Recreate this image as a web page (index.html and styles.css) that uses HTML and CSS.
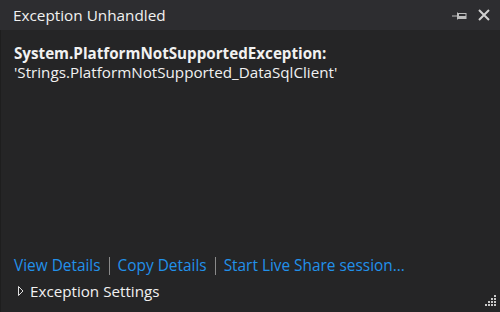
FILE: index.html
```html
<!DOCTYPE html>
<html>
<head>
<meta charset="utf-8">
<link rel="stylesheet" href="styles.css">
</head>
<body>
<div class="window">
  <div class="titlebar">
    <span class="title">Exception Unhandled</span>
    <div class="controls">
      <svg class="pin" width="15" height="8" viewBox="0 0 15 8">
        <path d="M0 4H5" stroke="#bdbdbd" stroke-width="1"/>
        <path d="M5.5 0.5V7.5" stroke="#bdbdbd" stroke-width="1"/>
        <rect x="6.5" y="1.5" width="7.5" height="5" fill="none" stroke="#bdbdbd" stroke-width="1"/>
        <rect x="6.5" y="4" width="7.5" height="2.5" fill="#bdbdbd"/>
      </svg>
      <svg class="close" width="12" height="12" viewBox="0 0 12 12">
        <path d="M1 1L11 11M11 1L1 11" stroke="#d0d0d0" stroke-width="2"/>
      </svg>
    </div>
  </div>
  <div class="body">
    <div class="message">
      <div class="exc">System.PlatformNotSupportedException:</div>
      <div class="detail">'Strings.PlatformNotSupported_DataSqlClient'</div>
    </div>
    <div class="links">
      <a class="link">View Details</a><span class="sep"></span><a class="link">Copy Details</a><span class="sep"></span><a class="link">Start Live Share session...</a>
    </div>
    <div class="settings">
      <svg class="arrow" width="6" height="10" viewBox="0 0 6 10">
        <path d="M0.5 0.5L5 5L0.5 9.5Z" fill="none" stroke="#e0e0e0" stroke-width="1"/>
      </svg>
      <span>Exception Settings</span>
    </div>
    <svg class="grip" width="14" height="14" viewBox="0 0 14 14">
      <g fill="#c8c8c8">
        <rect x="11" y="0" width="2" height="2"/>
        <rect x="8" y="3" width="2" height="2"/><rect x="11" y="3" width="2" height="2"/>
        <rect x="5" y="6" width="2" height="2"/><rect x="8" y="6" width="2" height="2"/><rect x="11" y="6" width="2" height="2"/>
        <rect x="2" y="9" width="2" height="2"/><rect x="5" y="9" width="2" height="2"/><rect x="8" y="9" width="2" height="2"/><rect x="11" y="9" width="2" height="2"/>
      </g>
    </svg>
  </div>
</div>
</body>
</html>
```
FILE: styles.css
```css
html, body {
  margin: 0;
  padding: 0;
  background: #252526;
}
.window {
  width: 500px;
  height: 312px;
  display: flex;
  flex-direction: column;
  font-family: "Open Sans", "Noto Sans", sans-serif;
  color: #f1f1f1;
  overflow: hidden;
}
.titlebar {
  height: 30px;
  background: #2d2d30;
  display: flex;
  align-items: center;
  justify-content: space-between;
  padding: 0 10px 0 13px;
  flex: none;
}
.title {
  font-size: 15.3px;
  color: #f1f1f1;
}
.controls {
  display: flex;
  align-items: center;
  gap: 11px;
}
.pin { margin-top: 1px; }
.body {
  flex: 1;
  position: relative;
  display: flex;
  flex-direction: column;
  padding: 13px 14px 0 13px;
  border-left: 1px solid #1e1e1e;
}
.message {
  flex: 1;
  font-size: 15.2px;
  line-height: 20px;
}
.exc { font-weight: 700; }
.detail { margin-top: -1px; }
.links {
  font-size: 15.4px;
  line-height: 20px;
  display: flex;
  align-items: center;
}
.link { color: #2291ea; }
.sep {
  width: 1px;
  height: 18px;
  background: #8a8a8a;
  margin: 0 8px;
}
.settings {
  display: flex;
  align-items: center;
  gap: 6px;
  font-size: 15.2px;
  line-height: 20px;
  margin: 3px 0 0 4px;
  height: 24px;
  padding-bottom: 9px;
}
.grip {
  position: absolute;
  right: 3px;
  bottom: 3px;
}
```
